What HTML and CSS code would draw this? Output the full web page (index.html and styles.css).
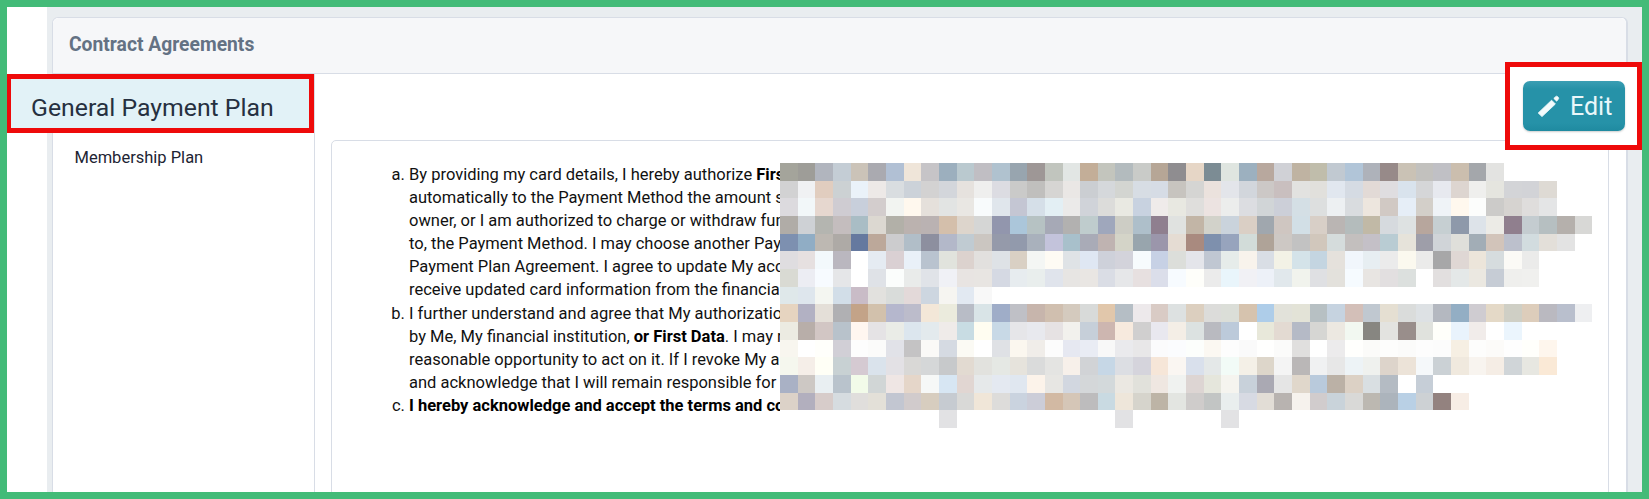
FILE: index.html
```html
<!DOCTYPE html>
<html lang="en">
<head>
<meta charset="utf-8">
<title>Contract Agreements</title>
<link rel="stylesheet" href="styles.css">
</head>
<body>
<div class="frame">
  <div class="gutter"></div>
  <main class="main">
    <section class="card">
      <header class="card-head">Contract Agreements</header>
      <div class="card-body">
        <nav class="side">
          <a class="side-item">Membership Plan</a>
        </nav>
        <div class="content">
          <article class="panel">
            <ol class="terms">
              <li><span class="ln">By providing my card details, I hereby authorize <b>First Data</b></span><span class="ln">automatically to the Payment Method the amount specified</span><span class="ln">owner, or I am authorized to charge or withdraw funds</span><span class="ln">to, the Payment Method. I may choose another Payment</span><span class="ln">Payment Plan Agreement. I agree to update My account</span><span class="ln">receive updated card information from the financial</span></li>
              <li><span class="ln">I further understand and agree that My authorization</span><span class="ln">by Me, My financial institution, <b>or First Data</b>. I may revoke</span><span class="ln">reasonable opportunity to act on it. If I revoke My authorization</span><span class="ln">and acknowledge that I will remain responsible for</span></li>
              <li><span class="ln"><b>I hereby acknowledge and accept the terms and conditions</b></span></li>
            </ol>
            <div class="mosaic" id="mosaic"></div>
          </article>
        </div>
      </div>
    </section>
  </main>
  <div class="mark mark-tab">General Payment Plan</div>
  <div class="mark mark-btn">
    <button class="edit-btn" type="button">
      <svg class="pencil" viewBox="0 0 24 24" aria-hidden="true"><path d="M2.2 19 15.6 6.2 19.4 10 6 22.6Z"/><path d="M17.8 4.4 19.6 2.7a1.5 1.5 0 0 1 2.1 0l.5.5a1.5 1.5 0 0 1 0 2.1L20.7 7.2Z"/></svg>
      <span>Edit</span>
    </button>
  </div>
</div>
<script src="mosaic.js"></script>
</body>
</html>
```
FILE: styles.css
```css
* { box-sizing: border-box; }
html, body { margin: 0; padding: 0; background: #fff; }
body { font-family: Roboto, "Liberation Sans", sans-serif; }

.frame {
  position: relative;
  width: 1649px;
  height: 499px;
  border: 7px solid #43bb78;
  display: flex;
  overflow: hidden;
  background: #fff;
}
.gutter { width: 40px; flex: none; background: #fff; }
.main {
  flex: 1;
  min-width: 0;
  background: #e9edf0;
  padding: 10px 14px 0 5px;
}
.card {
  height: 520px;
  background: #fff;
  border: 1px solid #d8dde6;
  border-right-width: 2px;
  border-radius: 6px 6px 0 0;
  display: flex;
  flex-direction: column;
}
.card-head {
  height: 56px;
  flex: none;
  padding: 16px 16px 0;
  background: #f6f7f9;
  border-bottom: 1px solid #d8dde6;
  border-radius: 6px 6px 0 0;
  font-size: 19.3px;
  line-height: 22px;
  font-weight: 700;
  color: #647284;
}
.card-body { flex: 1; display: flex; }
.side {
  width: 262px;
  flex: none;
  border-right: 1px solid #d8dde6;
  padding: 69px 0 0 21.5px;
}
.side-item {
  display: block;
  font-size: 16.5px;
  line-height: 30px;
  color: #1d2433;
}
.content { flex: 1; padding: 66px 17px 0 16px; }
.panel {
  position: relative;
  height: 400px;
  border: 1px solid #d8dde6;
  border-radius: 5px 5px 0 0;
  background: #fff;
}
.terms {
  margin: 0;
  width: 448px;
  overflow: hidden;
  padding: 22px 0 0 77px;
  list-style: lower-alpha;
  font-size: 16.5px;
  line-height: 23.1px;
  color: #111;
  white-space: nowrap;
}
.ln { display: block; }
.terms b { font-weight: 700; color: #000; }
.mosaic {
  position: absolute;
  left: 448px;
  top: 22px;
  display: grid;
  grid-template-columns: repeat(46, 17.66px);
  grid-auto-rows: 17.66px;
}
.mosaic i { display: block; }

.mark {
  position: absolute;
  border: 5px solid #ee0a0a;
}
.mark-tab {
  left: -1px;
  top: 67px;
  width: 308px;
  height: 59px;
  background: #e2f2f7;
  padding: 14px 0 0 20px;
  font-size: 24.8px;
  line-height: 30px;
  color: #263040;
  white-space: nowrap;
}
.mark-btn {
  left: 1498px;
  top: 55px;
  width: 137px;
  height: 88px;
  background: #fff;
  padding: 14px 0 0 13px;
}
.edit-btn {
  width: 102px;
  height: 50px;
  display: flex;
  align-items: center;
  padding: 0 0 0 13px;
  gap: 10px;
  border: 0;
  border-radius: 7px;
  background: linear-gradient(#3a9eb3 0, #2692a8 8px, #2692a8 42px, #1f8aa0 100%);
  box-shadow: 0 1px 2px rgba(0, 0, 0, .2);
  color: #eaf7fa;
  font-family: Roboto, "Liberation Sans", sans-serif;
  font-size: 25px;
}
.pencil { width: 24px; height: 24px; fill: #f4fbfc; stroke: #f4fbfc; stroke-width: .8; stroke-linejoin: round; flex: none; }
```
FILE: mosaic.js
```js
var rows = [
"a4a49b 9e9d98 b1b5be c4cdd5 cbc3b8 aaaab0 b1c0d4 efe5d9 c6c4c7 9cafbe bac9cf c0bec3 b0c2cf 98a5af 9e9796 c1c5be e2e6e4 c3ae98 c3c5bd b3bbbe c9cbc8 b6a696 8f8d90 e6d6c6 7c8c94 dfe5e0 9cb0bf b8a89e d0d1d6 bfb3a2 c0bdab c1c9d1 b1c5d8 aeb2ba 978a89 cac2b5 c2c1be c0c0c5 cbbeae a4a7ab e3e3e1",
"d2d2d3 f0f1f3 e1cdbf ccd1d3 eaf2f9 ede9e7 d9dde0 ccd2d9 d3d2d2 d3d6db e6e2de efefee dcdce2 cacac9 c0bfbd d6d5d3 eae7e5 cbced2 d5d8db d3d5d1 d7dde4 d6dce5 c7c4bf d5d5d3 ebe2dd e3e5ea d2d6dc ccc8c6 c9bfbf e2e2e0 e1e0dc e1e7ef d5dbe3 e2dad6 dfdde0 d9e3ed d5d6d8 e7e9ef ddd5d0 efefed e5e5df d3d4d7 d2d3d7 dedad4",
"dcdade f2f7f9 e6d7cf cfccd2 c8cfdb d3cdcd f2f4f1 fff8ee e5e0db e2e4e3 e9e7e3 f8fbfc e0e6ec c4c6d3 d5dfe8 e3eff4 ebeae9 d0d3d9 dcdcda e9e9e2 c8d2e0 efebea e8e8e1 dfdedc ece3e1 ecedec dcdde1 d1d5d7 cccfd8 d4dfe5 dddfdf edf0f2 d9dcdf ede6de d1c9c4 e6eef7 d3cfc9 eff3f7 fff8ee fcfdfc cccbc9 d6d3d0 dfdddc e4e5e6",
"b0aca7 ced1d5 b4b5b0 c4bdbe a9bdc5 dcd8d1 b2b0a8 bbb2af bab2b2 d4bfab ddd5cc d5d6d5 9296ad abc6da b6c2c3 a6a9b6 b2b1b0 bfcccd 9fa7bc cdcdc5 aebfca 8f7f8f e0e2e0 c2b5a6 d2d2ca cad3dc dacfc5 a0a7ae cfc6c1 d2dfe6 d8cfc7 bab5b3 b4bcbc c1b9a6 d6dade dee2e2 b7a69d c6cfd2 8e99aa dde3e9 ecebe6 907f8e c4ccd0 b6bfc1 b5b0ac d8d8d6",
"7d90b0 90adc5 bdb8b2 aeaaa6 65799f bca89a ccccce b1bec8 8d8f9f b3b8c9 c0cbd2 cbc6c1 959aaa 929aac a9b1bc c3c3db a8c0cb a9abb7 bfb3b1 d4d4c8 98a5ad 9b96ab e5dcd3 a98a7f 7e90ad 97a4bd d2dcd9 afa398 cdc8c4 c2c2c2 d1c7bc d5dcdc c3bfbe c4c0c7 b9ccd3 e6e3da 9e9ea9 d0d4d8 dfdfda a2adb6 d2c4ba bcc0cc d2dcdf e3dfd9 e3e3e3",
"dfdde0 e6e0e0 f3f9fc bab7bf ffffff e5ebf2 dad0d3 e9f0f8 b9c3cf e1e3dd dcd2ce e2e0de dee2e6 d9d0c4 f4f6f4 fefbf4 dfe3e6 dfe7f3 ced1da d3d3db f7fbfd c7d1e5 dcdeda e4e5ea c0c7d2 e6ecea f8f3ec d9dee5 f3f2e6 d4e3e9 c4d5e1 e5e1dc f1f6fc e7eef2 ebebeb fbf9ef ebebea a7a7a8 dfd7d4 ece5da d6dcde fbfaf6 ebebea",
"d9dad3 ecedf3 f7fbff e5e6e8 ffffff dfe2e7 fbfdfc e9ebea e0e3e8 f0f1f6 e8e4e2 e8e5e2 d5d9e3 e7ecef e9eeed e0e4ec e7e5e3 e9e6e3 dadde5 e6e7e9 e7e0e0 dbdeea f7fbff fefefa ebebeb e9f5fb f1f1f5 edf1f8 e1e8ec f1f3ed dfe0e3 e3e1dc f6fbff e8e5e2 e2dfe0 dce0de ffffff e2dfdf e4e8e8 ebe8e1 c6ccd5 efefed f0f0ee",
"dfe8ea dee6ed f4f6f1 d2dee8 c9bcc7 e2e1de d9dcda e3d9d9 cdd6e0 f6f5f1 e2e9f2 f8f8f8",
"e6d4c0 b2b1c3 e4dfd8 b0b0b3 c3a388 d2c1ac b5b7cd bcbccb f3e7d8 ebebdd b8bcc6 d9e4e7 9fadc8 bfc0c6 c7b5ac d0bfaf d4cabe d8dad9 e1c7ab b5bec5 ede9eb d9cbc5 dde1e1 dccfbf dcdcda dbded8 d6c3ae aecde9 e2e2da e3e3d7 b7c0c3 c6d3e0 d3bfb8 c0c8d0 e5dfd2 dadcdb dde1e4 b4b8c0 93aec4 cfccd1 e4d9c7 cfcfc5 ddcdbb bab9c0 b9bfcd eeeff1",
"ecebe2 b8aea9 d2c6c4 b8c2cb fff6f0 e5e3e5 eaece7 dce6ee e3eaed efebe9 c8dce3 fffdf1 c8d9e6 e6e6e9 e8e9ee e6e2e3 f2f1ed c6cfd9 cdb6b0 f7eade d0cfcf e9e8ef f4eee6 dce2e1 b9bac0 bccada ffffff e8e8da e3dad2 b5bac6 d6d6d3 ece8e1 f2f8f1 878681 e3e3e0 998e8b e0e2dd fffffa e9f3fc f1ecea ffffff ebf5fd",
"f8f6ef ffffff fffffb d1cfd6 fdfdfd fbfbfa e1e2e8 c4c3c4 faf9f7 d5dae2 fbfaf4 ffffff dfe1e5 fbf7ef f0ede9 fcfcfc e6e8f1 e9ecf4 f8f8f8 eaeaed e8e7e8 fbfbfc fbfcfe fcfefc fbf8f2 fdfdfd fafafa fffffe fbfbfa e0dfde ffffff ecebec fffffd fbfbf9 fdfdfc fbfbfa fdfdfd fcfcfc f6efe3 fdfdfc fcfbf9 fefefe fffffb fef6ed",
"f5f7ee f5eee8 fffff6 c8d1d3 d5cad2 dae3ec e3e1e5 d9d8d6 d5d7d8 c7c9cb e2dad1 e2e2de e5e8e4 e6e3dc dadbdb e4e4e2 f7f0ea d1d3d6 c6d7e6 dcdee3 d5d4dc f6e6d8 faf6f2 d9e0ec e4e8e8 f2fbf7 f4f0e7 ddd6ca f4f4f4 bab7b7 f0f1f2 e7e7e7 edf3f6 eff1ee ddd4cb ece3d8 f5f8fa cbd1d5 f0e9de f8f4ef f5ede5 d0d5d8 e7e7e1 fae9d6",
"a9b1c5 cdc8c4 e9eff2 b9c3cc f2fbe9 d1d6d6 efe6e4 e5d6c9 f6f8f7 d7e6f3 e1d6d2 e6e9ea e4e9f1 e0e7f0 fcf3ea e7e6e3 d2d7e0 d4d7d9 d3d9db ebe8e2 e1e1db efe7e1 f0f2f0 ddd5d3 e5e6dc f5f4ef c8d1da aaa9b3 e5e5e5 e0d7cb b9cadc bbb1a6 dcd1c5 d9dfe2 b4bbc3 ffffff c6ced7",
"dcd2c8 b2afbe d7ccca d6dce0 e0dedc e3e0d8 c2c6d1 d1cbcc d7cdbf c6cbd1 d9d9d7 f0e6d8 dddcda cad3df cccdd8 d2b9a3 d5c6b7 bdbcbd c9dae2 eee6da d6d4cc bdb4a6 e3e5e1 cfcccb c2c5c4 e9eeee d7dae3 e2ddd6 b8b3b0 f6f2ed d1cccd c9d3da d9d9d7 bcb8b1 acb4bc b9d0e5 cdd1d4 93827f f7ede5",
"- - - - - - - - - e2e2e4 - - - - - - - - - e2e2e4 - - - - - e2e2e4"
];
var box = document.getElementById("mosaic");
rows.forEach(function (row, y) {
  row.split(" ").forEach(function (hex, x) {
    if (hex === "-") return;
    var cell = document.createElement("i");
    cell.style.gridColumn = x + 1;
    cell.style.gridRow = y + 1;
    cell.style.background = "#" + hex;
    box.appendChild(cell);
  });
});
```
